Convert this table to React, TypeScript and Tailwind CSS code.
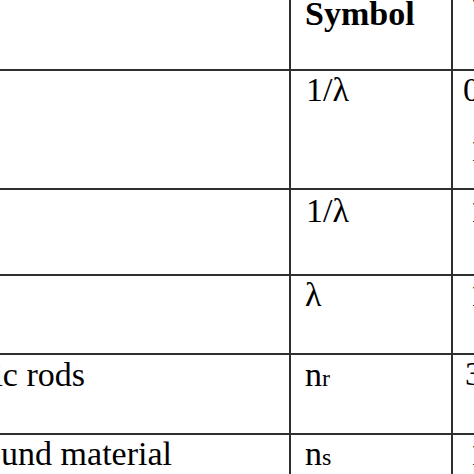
import React from "react";

const serif = { fontFamily: '"Liberation Serif", "Times New Roman", "DejaVu Serif", serif' };

export default function App() {
  return (
    <div
      className="w-[474px] h-[474px] overflow-hidden bg-white text-black text-[34px] leading-[38px]"
      style={serif}
    >
      {/* header */}
      <div className="flex h-[71px] border-b-2 border-[#2e2e2e]">
        <div className="w-[291px] shrink-0 border-r-2 border-[#2e2e2e]" />
        <div className="w-[162px] shrink-0 border-r-2 border-[#2e2e2e] flex items-end pb-[36px] pl-[14px]">
          <span className="font-bold">Symbol</span>
        </div>
        <div className="flex-1 pl-[13px] whitespace-nowrap">
          <div className="-mt-[21px] font-bold">Value</div>
        </div>
      </div>

      {/* row 1 */}
      <div className="flex h-[119px] border-b-2 border-[#2e2e2e]">
        <div className="w-[291px] shrink-0 border-r-2 border-[#2e2e2e]" />
        <div className="w-[162px] shrink-0 border-r-2 border-[#2e2e2e] pl-[15px]">
          1/λ
        </div>
        <div className="flex-1 whitespace-nowrap">
          <div className="pl-[10px]">0.5</div>
          <div className="pl-[17px] mt-[22px]">1</div>
        </div>
      </div>

      {/* row 2 */}
      <div className="flex h-[86px] border-b-2 border-[#2e2e2e]">
        <div className="w-[291px] shrink-0 border-r-2 border-[#2e2e2e]" />
        <div className="w-[162px] shrink-0 border-r-2 border-[#2e2e2e] pl-[15px] pt-[2px]">
          1/λ
        </div>
        <div className="flex-1 pl-[17px] pt-[2px] whitespace-nowrap">1</div>
      </div>

      {/* row 3 */}
      <div className="flex h-[79px] border-b-2 border-[#2e2e2e]">
        <div className="w-[291px] shrink-0 border-r-2 border-[#2e2e2e]" />
        <div className="w-[162px] shrink-0 border-r-2 border-[#2e2e2e] pl-[14px]">
          λ
        </div>
        <div className="flex-1 pl-[17px] whitespace-nowrap">1</div>
      </div>

      {/* row 4 */}
      <div className="flex h-[80px] border-b-2 border-[#2e2e2e]">
        <div className="w-[291px] shrink-0 border-r-2 border-[#2e2e2e] flex justify-end pr-[204px] pt-[1px] whitespace-nowrap">
          <span>Refractive index of dielectric rods</span>
        </div>
        <div className="w-[162px] shrink-0 border-r-2 border-[#2e2e2e] pl-[14px] pt-[1px]">
          n<span className="text-[24px]">r</span>
        </div>
        <div className="flex-1 pl-[12px] whitespace-nowrap">3.4</div>
      </div>

      {/* row 5 */}
      <div className="flex h-[60px]">
        <div className="w-[291px] shrink-0 border-r-2 border-[#2e2e2e] flex justify-end pr-[117px] whitespace-nowrap">
          <span>Refractive index of background material</span>
        </div>
        <div className="w-[162px] shrink-0 border-r-2 border-[#2e2e2e] pl-[14px]">
          n<span className="text-[24px]">s</span>
        </div>
        <div className="flex-1 pl-[17px] whitespace-nowrap">1</div>
      </div>
    </div>
  );
}
